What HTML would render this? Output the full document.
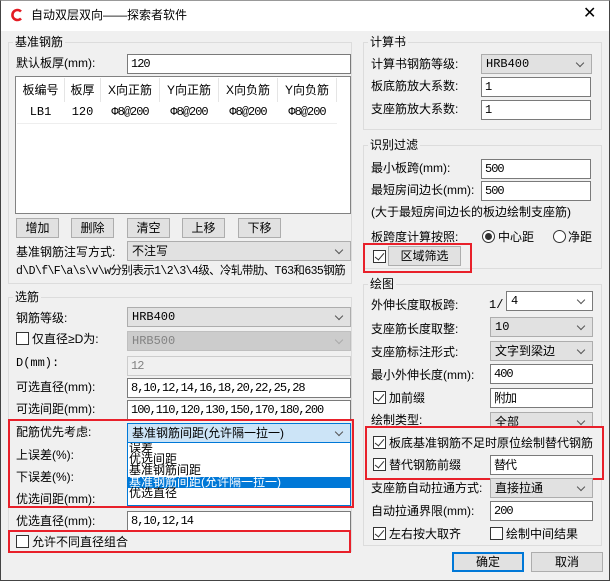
<!DOCTYPE html>
<html><head><meta charset="utf-8"><style>
*{box-sizing:border-box;margin:0;padding:0}
body{width:610px;height:581px;overflow:hidden;background:#f0f0f0;font-family:"Liberation Sans","Noto Sans CJK SC","WenQuanYi Zen Hei",sans-serif;font-size:12px;color:#000;position:relative}
.a{position:absolute;white-space:nowrap;line-height:14px}
.win{position:absolute;left:0;top:0;width:610px;height:581px;border:1px solid #444;border-top:1px solid #999}
.title{position:absolute;left:1px;top:1px;width:608px;height:30px;background:#fff}
.gb{position:absolute;border:1px solid #dcdcdc}
.gt{position:absolute;background:#f0f0f0;padding:0 2px;line-height:14px}
.in{position:absolute;background:#fff;border:1px solid #7a7a7a;height:20px;line-height:18px;padding-left:3px;font-family:"Liberation Mono","Noto Sans CJK SC",monospace;font-size:12px;letter-spacing:-1px;overflow:hidden}
.sel{position:absolute;background:#e1e1e1;border:1px solid #adadad;height:20px;line-height:18px;padding-left:4px;font-family:"Liberation Mono","Noto Sans CJK SC",monospace;font-size:12px}
.sel::after{content:"";position:absolute;right:8px;top:5px;width:5px;height:5px;border-right:1px solid #555;border-bottom:1px solid #555;transform:rotate(45deg)}
.dis{color:#838383;background:#ccc;border-color:#bfbfbf}
.dis::after{border-color:#aaa}
.btn{position:absolute;background:#e1e1e1;border:1px solid #adadad;height:20px;line-height:18px;text-align:center}
.cb{position:absolute;width:13px;height:13px;border:1px solid #333;background:#fff}
.cb.on::after{content:"";position:absolute;left:3px;top:0px;width:4px;height:8px;border-right:1px solid #333;border-bottom:1px solid #333;transform:rotate(40deg)}
.red{position:absolute;border:2px solid #e8202a}
.mono{font-family:"Liberation Mono","Noto Sans CJK SC",monospace}
</style></head><body>
<div class="win"></div>
<div class="title"></div>
<svg class="a" style="left:10px;top:8px" width="14" height="14" viewBox="0 0 14 14"><path d="M11 3.5A5 5 0 1 0 11 10.5" fill="none" stroke="#e31b23" stroke-width="2.6"/></svg>
<div class="a" style="left:31px;top:8px">自动双层双向——探索者软件</div>
<div class="a" style="left:583px;top:7px;font-size:16px">✕</div>

<div class="gb" style="left:8px;top:42px;width:344px;height:242px"></div>
<div class="gt" style="left:13px;top:35px">基准钢筋</div>
<div class="a" style="left:16px;top:56px">默认板厚(mm):</div>
<div class="in" style="left:127px;top:54px;width:224px">120</div>
<div style="position:absolute;left:15px;top:76px;width:336px;height:138px;background:#fff;border:1px solid #828282"></div>
<div class="a" style="left:17px;top:83px;width:47px;text-align:center">板编号</div>
<div class="a" style="left:65px;top:83px;width:35px;text-align:center">板厚</div>
<div class="a" style="left:101px;top:83px;width:58px;text-align:center">X向正筋</div>
<div class="a" style="left:160px;top:83px;width:58px;text-align:center">Y向正筋</div>
<div class="a" style="left:219px;top:83px;width:58px;text-align:center">X向负筋</div>
<div class="a" style="left:278px;top:83px;width:58px;text-align:center">Y向负筋</div>
<div style="position:absolute;left:64px;top:78px;width:1px;height:24px;background:#e5e5e5"></div>
<div style="position:absolute;left:100px;top:78px;width:1px;height:24px;background:#e5e5e5"></div>
<div style="position:absolute;left:159px;top:78px;width:1px;height:24px;background:#e5e5e5"></div>
<div style="position:absolute;left:218px;top:78px;width:1px;height:24px;background:#e5e5e5"></div>
<div style="position:absolute;left:277px;top:78px;width:1px;height:24px;background:#e5e5e5"></div>
<div style="position:absolute;left:336px;top:78px;width:1px;height:24px;background:#e5e5e5"></div>
<div style="position:absolute;left:17px;top:123px;width:320px;height:1px;background:#eee"></div>
<div class="a mono" style="left:17px;top:105px;width:47px;text-align:center">LB1</div>
<div class="a mono" style="left:65px;top:105px;width:35px;text-align:center">120</div>
<div class="a mono" style="left:101px;top:105px;width:58px;text-align:center;letter-spacing:-1px">Φ8@200</div>
<div class="a mono" style="left:160px;top:105px;width:58px;text-align:center;letter-spacing:-1px">Φ8@200</div>
<div class="a mono" style="left:219px;top:105px;width:58px;text-align:center;letter-spacing:-1px">Φ8@200</div>
<div class="a mono" style="left:278px;top:105px;width:58px;text-align:center;letter-spacing:-1px">Φ8@200</div>
<div class="btn" style="left:16px;top:218px;width:43px">增加</div>
<div class="btn" style="left:71px;top:218px;width:43px">删除</div>
<div class="btn" style="left:127px;top:218px;width:43px">清空</div>
<div class="btn" style="left:182px;top:218px;width:43px">上移</div>
<div class="btn" style="left:238px;top:218px;width:43px">下移</div>
<div class="a" style="left:16px;top:245px">基准钢筋注写方式:</div>
<div class="sel" style="left:127px;top:241px;width:224px;font-family:'Liberation Sans','Noto Sans CJK SC',sans-serif">不注写</div>
<div class="a mono" style="left:16px;top:265px;font-size:11.5px;letter-spacing:-0.6px">d\D\f\F\a\s\v\w分别表示1\2\3\4级、冷轧带肋、T63和635钢筋</div>

<div class="gb" style="left:8px;top:297px;width:344px;height:255px"></div>
<div class="gt" style="left:13px;top:290px">选筋</div>
<div class="a" style="left:16px;top:311px">钢筋等级:</div>
<div class="sel" style="left:127px;top:307px;width:224px">HRB400</div>
<div class="cb" style="left:16px;top:332px"></div>
<div class="a" style="left:32px;top:332px">仅直径≥D为:</div>
<div class="sel dis" style="left:127px;top:331px;width:224px">HRB500</div>
<div class="a mono" style="left:16px;top:356px">D(mm):</div>
<div class="in" style="left:127px;top:356px;width:224px;color:#838383;background:#f0f0f0;border-color:#ccc">12</div>
<div class="a" style="left:16px;top:380px">可选直径(mm):</div>
<div class="in" style="left:127px;top:378px;width:224px">8,10,12,14,16,18,20,22,25,28</div>
<div class="a" style="left:16px;top:402px">可选间距(mm):</div>
<div class="in" style="left:127px;top:400px;width:224px">100,110,120,130,150,170,180,200</div>
<div class="a" style="left:16px;top:425px">配筋优先考虑:</div>
<div class="sel" style="left:127px;top:423px;width:224px;background:#cce4f7;border-color:#0078d7;font-family:'Liberation Sans','Noto Sans CJK SC',sans-serif">基准钢筋间距(允许隔一拉一)</div>
<div class="a" style="left:16px;top:448px">上误差(%):</div>
<div class="a" style="left:16px;top:470px">下误差(%):</div>
<div class="a" style="left:16px;top:492px">优选间距(mm):</div>
<div style="position:absolute;left:127px;top:443px;width:224px;height:63px;background:#fff;border:1px solid #0078d7;border-top:none;overflow:hidden">
<div style="line-height:11px;padding-left:1px">误差</div>
<div style="line-height:11px;padding-left:1px">优选间距</div>
<div style="line-height:11px;padding-left:1px">基准钢筋间距</div>
<div style="line-height:11px;padding-left:1px;background:#0078d7;color:#fff;margin-top:1px">基准钢筋间距(允许隔一拉一)</div>
<div style="line-height:11px;padding-left:1px">优选直径</div>
</div>
<div class="a" style="left:16px;top:514px">优选直径(mm):</div>
<div class="in" style="left:127px;top:511px;width:224px">8,10,12,14</div>
<div class="cb" style="left:16px;top:535px"></div>
<div class="a" style="left:32px;top:535px">允许不同直径组合</div>
<div class="red" style="left:8px;top:419px;width:346px;height:89px"></div>
<div class="red" style="left:8px;top:530px;width:343px;height:23px"></div>

<div class="gb" style="left:363px;top:42px;width:239px;height:88px"></div>
<div class="gt" style="left:368px;top:35px">计算书</div>
<div class="a" style="left:371px;top:57px">计算书钢筋等级:</div>
<div class="sel" style="left:481px;top:54px;width:111px">HRB400</div>
<div class="a" style="left:371px;top:79px">板底筋放大系数:</div>
<div class="in" style="left:481px;top:77px;width:110px">1</div>
<div class="a" style="left:371px;top:102px">支座筋放大系数:</div>
<div class="in" style="left:481px;top:100px;width:110px">1</div>

<div class="gb" style="left:363px;top:145px;width:239px;height:124px"></div>
<div class="gt" style="left:368px;top:138px">识别过滤</div>
<div class="a" style="left:371px;top:161px">最小板跨(mm):</div>
<div class="in" style="left:481px;top:159px;width:110px">500</div>
<div class="a" style="left:371px;top:183px">最短房间边长(mm):</div>
<div class="in" style="left:481px;top:181px;width:110px">500</div>
<div class="a" style="left:371px;top:205px">(大于最短房间边长的板边绘制支座筋)</div>
<div class="a" style="left:371px;top:230px">板跨度计算按照:</div>
<div style="position:absolute;left:482px;top:230px;width:13px;height:13px;border:1px solid #333;border-radius:50%;background:#fff"><div style="position:absolute;left:2px;top:2px;width:7px;height:7px;border-radius:50%;background:#333"></div></div>
<div class="a" style="left:498px;top:230px">中心距</div>
<div style="position:absolute;left:553px;top:230px;width:13px;height:13px;border:1px solid #333;border-radius:50%;background:#fff"></div>
<div class="a" style="left:568px;top:230px">净距</div>
<div class="cb on" style="left:373px;top:250px"></div>
<div class="btn" style="left:388px;top:246px;width:73px">区域筛选</div>
<div class="red" style="left:363px;top:243px;width:109px;height:30px"></div>

<div class="gb" style="left:363px;top:284px;width:239px;height:262px"></div>
<div class="gt" style="left:368px;top:277px">绘图</div>
<div class="a" style="left:371px;top:298px">外伸长度取板跨:</div>
<div class="a mono" style="left:489px;top:298px">1/</div>
<div class="sel" style="left:506px;top:291px;width:87px;background:#fff;border-color:#7a7a7a">4</div>
<div class="a" style="left:371px;top:322px">支座筋长度取整:</div>
<div class="sel" style="left:490px;top:317px;width:103px">10</div>
<div class="a" style="left:371px;top:345px">支座筋标注形式:</div>
<div class="sel" style="left:490px;top:341px;width:103px;font-family:'Liberation Sans','Noto Sans CJK SC',sans-serif">文字到梁边</div>
<div class="a" style="left:371px;top:368px">最小外伸长度(mm):</div>
<div class="in" style="left:490px;top:364px;width:103px">400</div>
<div class="cb on" style="left:373px;top:391px"></div>
<div class="a" style="left:389px;top:391px">加前缀</div>
<div class="in" style="left:490px;top:388px;width:103px;font-family:'Liberation Sans','Noto Sans CJK SC',sans-serif">附加</div>
<div class="a" style="left:371px;top:413px">绘制类型:</div>
<div class="sel" style="left:490px;top:412px;width:103px;font-family:'Liberation Sans','Noto Sans CJK SC',sans-serif">全部</div>
<div style="position:absolute;left:365px;top:428px;width:238px;height:51px;background:#f0f0f0"></div>
<div class="cb on" style="left:373px;top:436px"></div>
<div class="a" style="left:389px;top:436px">板底基准钢筋不足时原位绘制替代钢筋</div>
<div class="cb on" style="left:373px;top:458px"></div>
<div class="a" style="left:389px;top:458px">替代钢筋前缀</div>
<div class="in" style="left:490px;top:455px;width:103px;font-family:'Liberation Sans','Noto Sans CJK SC',sans-serif">替代</div>
<div class="red" style="left:365px;top:426px;width:239px;height:54px"></div>
<div class="a" style="left:371px;top:481px">支座筋自动拉通方式:</div>
<div class="sel" style="left:490px;top:478px;width:103px;font-family:'Liberation Sans','Noto Sans CJK SC',sans-serif">直接拉通</div>
<div class="a" style="left:371px;top:504px">自动拉通界限(mm):</div>
<div class="in" style="left:490px;top:501px;width:103px">200</div>
<div class="cb on" style="left:373px;top:527px"></div>
<div class="a" style="left:389px;top:527px">左右按大取齐</div>
<div class="cb" style="left:490px;top:527px"></div>
<div class="a" style="left:506px;top:527px">绘制中间结果</div>

<div class="btn" style="left:452px;top:552px;width:72px;border:2px solid #0078d7;line-height:16px">确定</div>
<div class="btn" style="left:531px;top:552px;width:72px">取消</div>
</body></html>
